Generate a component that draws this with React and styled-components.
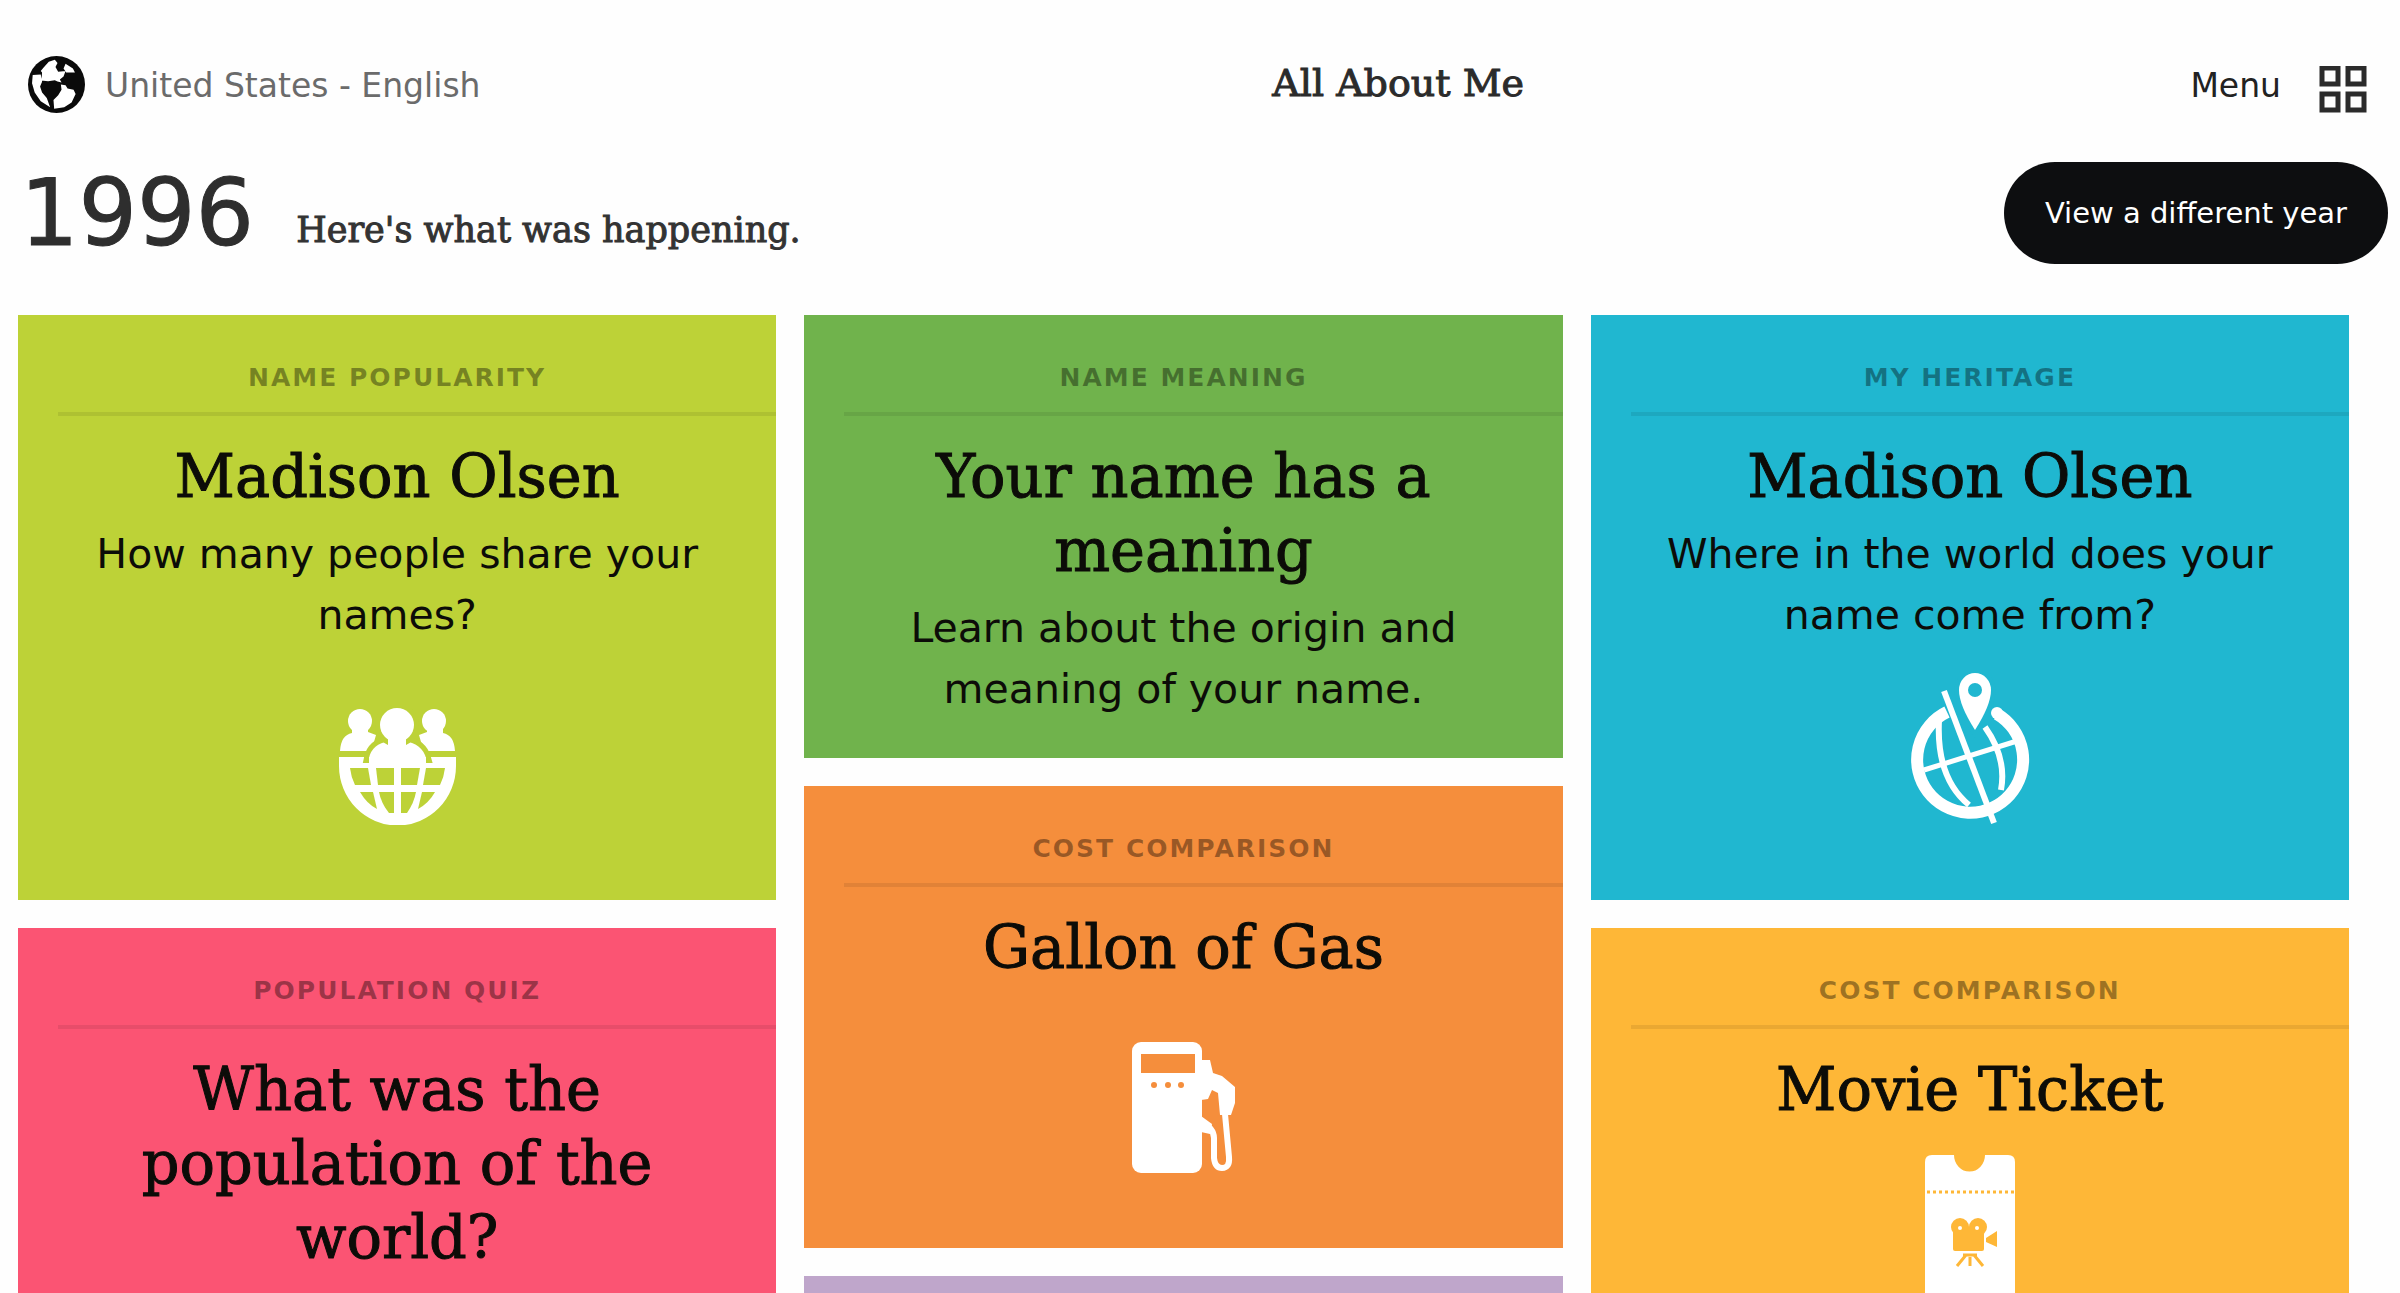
import React from "react";
import styled, { createGlobalStyle } from "styled-components";

const SANS = '"DejaVu Sans", Verdana, sans-serif';
const SLAB = '"DejaVu Serif", "Museo Slab", serif';

const GlobalStyle = createGlobalStyle`
  *, *::before, *::after { box-sizing: border-box; }
  body { margin: 0; background: #fefefe; font-family: ${SANS}; }
  h1, h2, p { margin: 0; font-weight: 400; }
  button { font: inherit; border: 0; padding: 0; background: none; cursor: pointer; }
`;

const Page = styled.div`
  height: 100vh;
  overflow: hidden;
`;

const TopBar = styled.header`
  display: grid;
  grid-template-columns: 31fr auto 21fr;
  align-items: start;
  padding: 56px 33px 0 28px;
`;

const Locale = styled.button`
  display: flex;
  align-items: flex-start;
  justify-self: start;
  gap: 20px;
  font-size: 33px;
  line-height: 60px;
  color: #6b6b6b;
`;

const SiteTitle = styled.a`
  font-family: ${SLAB};
  font-size: 38px;
  line-height: 54px;
  color: #2b2b2b;
  text-decoration: none;
  -webkit-text-stroke: 1px currentColor;
`;

const MenuButton = styled.button`
  display: flex;
  align-items: flex-end;
  justify-self: end;
  gap: 38px;
  font-size: 33px;
  line-height: 60px;
  color: #222;
`;

const YearBar = styled.section`
  display: flex;
  align-items: flex-start;
  justify-content: space-between;
  padding: 46px 12px 0 20px;
`;

const YearGroup = styled.div`
  display: flex;
  align-items: flex-end;
  gap: 42px;
`;

const Year = styled.h1`
  font-size: 92px;
  line-height: 104px;
  color: #2e2e2e;
  -webkit-text-stroke: 1px currentColor;
`;

const Tagline = styled.p`
  font-family: ${SLAB};
  font-size: 35px;
  line-height: 72px;
  color: #333;
  -webkit-text-stroke: 1px currentColor;
`;

const YearButton = styled.button`
  && {
    height: 102px;
    padding: 0 41px;
    border-radius: 51px;
    background: #0d0e10;
    color: #fff;
    font-size: 29px;
  }
`;

const Columns = styled.main`
  display: grid;
  grid-template-columns: repeat(3, minmax(0, 1fr));
  gap: 28px;
  align-items: start;
  padding: 49px 51px 0 18px;
`;

const Column = styled.div`
  display: flex;
  flex-direction: column;
  gap: 28px;
`;

const Card = styled.article`
  display: flex;
  flex-direction: column;
  min-height: ${(p) => p.$minHeight || 0}px;
  background: ${(p) => p.$color};
  color: #0c0c08;
  text-align: center;
`;

const Category = styled.p`
  margin-left: 40px;
  padding: 43px 40px 14px 0;
  border-bottom: 4px solid rgba(0, 0, 0, 0.08);
  font-size: 25px;
  line-height: 40px;
  font-weight: 700;
  letter-spacing: 2px;
  text-transform: uppercase;
  color: rgba(0, 0, 0, 0.38);
`;

const Heading = styled.h2`
  padding: 24px 40px 0;
  font-family: ${SLAB};
  font-size: 59px;
  line-height: 74px;
  -webkit-text-stroke: 1px currentColor;
`;

const Blurb = styled.p`
  padding: 10px 40px 0;
  font-size: 41px;
  line-height: 61px;
`;

const Art = styled.div`
  display: flex;
  align-items: flex-end;
  justify-content: center;
  min-height: ${(p) => p.$minHeight}px;
  margin-top: 27px;
`;

const CardEnd = styled.div`
  height: ${(p) => p.$size}px;
`;

const GlobeIcon = () => (
  <svg width="57" height="57" viewBox="24 27 170 170" aria-hidden="true">
    <circle cx="109" cy="112" r="85" fill="#0a0a0a" />
    <path
      fill="#fff"
      d="M70 62 86 44 104 38 112 48 106 60 114 74 136 72 130 88 119 97 124 106 112 103 104 99 84 102 64 100 66 76 62 72ZM136 50 158 64 164 76 138 76 130 64ZM38 84 62 82 66 104 60 118 66 136 80 152 90 180 62 162 44 136 36 108ZM122 112 136 114 142 124 160 128 166 140 154 166 132 180 102 184 100 158 114 144 124 128Z"
    />
  </svg>
);

const GridIcon = () => (
  <svg width="48" height="50" viewBox="0 -1 48 50" fill="none" stroke="#2b2b2b" strokeWidth="5" aria-hidden="true">
    <rect x="3" y="1" width="16" height="16" />
    <rect x="29" y="1" width="16" height="16" />
    <rect x="3" y="27" width="16" height="16" />
    <rect x="29" y="27" width="16" height="16" />
  </svg>
);

const PeopleGlobe = ({ bg }) => (
  <svg width="117" height="117" viewBox="0 0 117 117" aria-hidden="true">
    <path fill="#fff" d="M0 49H117V58A58 59 0 0 1 0 58Z" />
    <g fill={bg}>
      <path d="M11 60H29L32 77H16Q12 69 11 60Z" />
      <path d="M37 60H55V77H39Z" />
      <path d="M62 60H81L78 77H62Z" />
      <path d="M87 60H106Q105 69 101 77H84Z" />
      <path d="M21 84H34L38 101Q28 96 21 84Z" />
      <path d="M40 84H55V105L50 105Q42 95 40 84Z" />
      <path d="M62 84H77Q75 95 68 105L62 105Z" />
      <path d="M83 84H96Q90 95 79 101Z" />
    </g>
    <g fill="#fff">
      <circle cx="21" cy="13" r="12" />
      <circle cx="95" cy="13" r="12" />
      <path d="M1 43Q2 27 13 25V20H29V24L37 27 35 34 28 43Z" />
      <path d="M116 43Q115 27 104 25V20H88V24L80 27 82 34 89 43Z" />
    </g>
    <g fill="#fff" stroke={bg} strokeWidth="10" paintOrder="stroke">
      <path d="M30 50Q33 36 50 33H66Q83 36 87 50Z" />
      <circle cx="58" cy="17" r="17" />
    </g>
    <path fill="#fff" d="M49 28H67V40H49ZM30 49H87V60H30Z" />
  </svg>
);

const HeritageGlobe = ({ bg }) => (
  <svg width="120" height="152" viewBox="0 0 120 152" fill="none" aria-hidden="true">
    <g stroke="#fff">
      <path d="M34 18 84 150" strokeWidth="6" />
      <path d="M14 97 107 68" strokeWidth="5" />
      <path d="M29 47Q26 105 59 132" strokeWidth="6" />
      <path d="M75 54Q97 85 91 117" strokeWidth="6" />
    </g>
    <path
      fill="#fff"
      stroke={bg}
      strokeWidth="9"
      paintOrder="stroke"
      d="M65 57Q49 32 49 17A16 17 0 0 1 81 17Q81 32 65 57Z"
    />
    <path d="M87 41A53 53 0 1 1 37 39" stroke="#fff" strokeWidth="12" />
    <circle cx="87" cy="40" r="6" fill="#fff" />
    <circle cx="65" cy="17" r="7" fill={bg} />
  </svg>
);

const GasPump = ({ bg }) => (
  <svg width="103" height="131" viewBox="0 0 103 131" aria-hidden="true">
    <rect width="70" height="131" rx="9" fill="#fff" />
    <rect x="9" y="12" width="54" height="19" fill={bg} />
    <g fill={bg}>
      <circle cx="22" cy="43" r="3" />
      <circle cx="36" cy="43" r="3" />
      <circle cx="49" cy="43" r="3" />
    </g>
    <path fill="#fff" d="M68 18H78L81 31 90 34 103 45V61L99 73H88L86 51 80 48 76 57 69 58Z" />
    <path
      fill="none"
      stroke="#fff"
      strokeWidth="6"
      d="M68 79Q82 86 82 96V116Q83 126 90 126 98 126 97 115L93 72"
    />
    <path fill="#fff" d="M69 74 80 82 78 92 69 90Z" />
  </svg>
);

const TicketIcon = ({ bg }) => (
  <svg width="90" height="180" viewBox="0 0 90 180" aria-hidden="true">
    <path fill="#fff" d="M7 1H29A15 16 0 0 0 60 1H83Q90 1 90 8V173Q90 180 83 180H7Q0 180 0 173V8Q0 1 7 1Z" />
    <path d="M2 38H90" stroke={bg} strokeWidth="3" strokeDasharray="3 3" />
    <g fill={bg}>
      <circle cx="35" cy="73" r="9" />
      <circle cx="53" cy="73" r="9" />
      <rect x="28" y="73" width="31" height="24" rx="2" />
      <path d="M61 84 72 77V93L61 88Z" />
    </g>
    <circle cx="35" cy="74" r="2" fill="#fff" />
    <circle cx="52" cy="74" r="2" fill="#fff" />
    <path d="M41 101 32 112M45 103V112M49 101 58 112M38 101H52" stroke={bg} strokeWidth="3" />
  </svg>
);

const LIME = "#bdd237";
const PINK = "#fb5473";
const GREEN = "#70b34c";
const ORANGE = "#f58e3c";
const PURPLE = "#bfa6cb";
const TEAL = "#20b7d0";
const AMBER = "#feb737";

const columns = [
  [
    {
      color: LIME,
      category: "Name Popularity",
      title: "Madison Olsen",
      text: "How many people share your names?",
      art: PeopleGlobe,
      artHeight: 152,
      end: 75,
    },
    {
      color: PINK,
      category: "Population Quiz",
      title: "What was the population of the world?",
      end: 75,
    },
  ],
  [
    {
      color: GREEN,
      category: "Name Meaning",
      title: "Your name has a meaning",
      text: "Learn about the origin and meaning of your name.",
      end: 38,
    },
    {
      color: ORANGE,
      category: "Cost Comparison",
      title: "Gallon of Gas",
      art: GasPump,
      artHeight: 161,
      end: 75,
    },
    { color: PURPLE, minHeight: 400 },
  ],
  [
    {
      color: TEAL,
      category: "My Heritage",
      title: "Madison Olsen",
      text: "Where in the world does your name come from?",
      art: HeritageGlobe,
      artHeight: 152,
      end: 75,
    },
    {
      color: AMBER,
      category: "Cost Comparison",
      title: "Movie Ticket",
      art: TicketIcon,
      artHeight: 161,
      end: 75,
    },
  ],
];

function StoryCard({ card }) {
  const Picture = card.art;
  return (
    <Card $color={card.color} $minHeight={card.minHeight}>
      {card.category && <Category>{card.category}</Category>}
      {card.title && <Heading>{card.title}</Heading>}
      {card.text && <Blurb>{card.text}</Blurb>}
      {Picture && (
        <Art $minHeight={card.artHeight}>
          <Picture bg={card.color} />
        </Art>
      )}
      {card.end && <CardEnd $size={card.end} />}
    </Card>
  );
}

export default function App() {
  return (
    <Page>
      <GlobalStyle />
      <TopBar>
        <Locale type="button">
          <GlobeIcon />
          United States - English
        </Locale>
        <SiteTitle href="#home">All About Me</SiteTitle>
        <MenuButton type="button">
          Menu
          <GridIcon />
        </MenuButton>
      </TopBar>
      <YearBar>
        <YearGroup>
          <Year>1996</Year>
          <Tagline>Here's what was happening.</Tagline>
        </YearGroup>
        <YearButton type="button">View a different year</YearButton>
      </YearBar>
      <Columns>
        {columns.map((cards, i) => (
          <Column key={i}>
            {cards.map((card, j) => (
              <StoryCard key={j} card={card} />
            ))}
          </Column>
        ))}
      </Columns>
    </Page>
  );
}
